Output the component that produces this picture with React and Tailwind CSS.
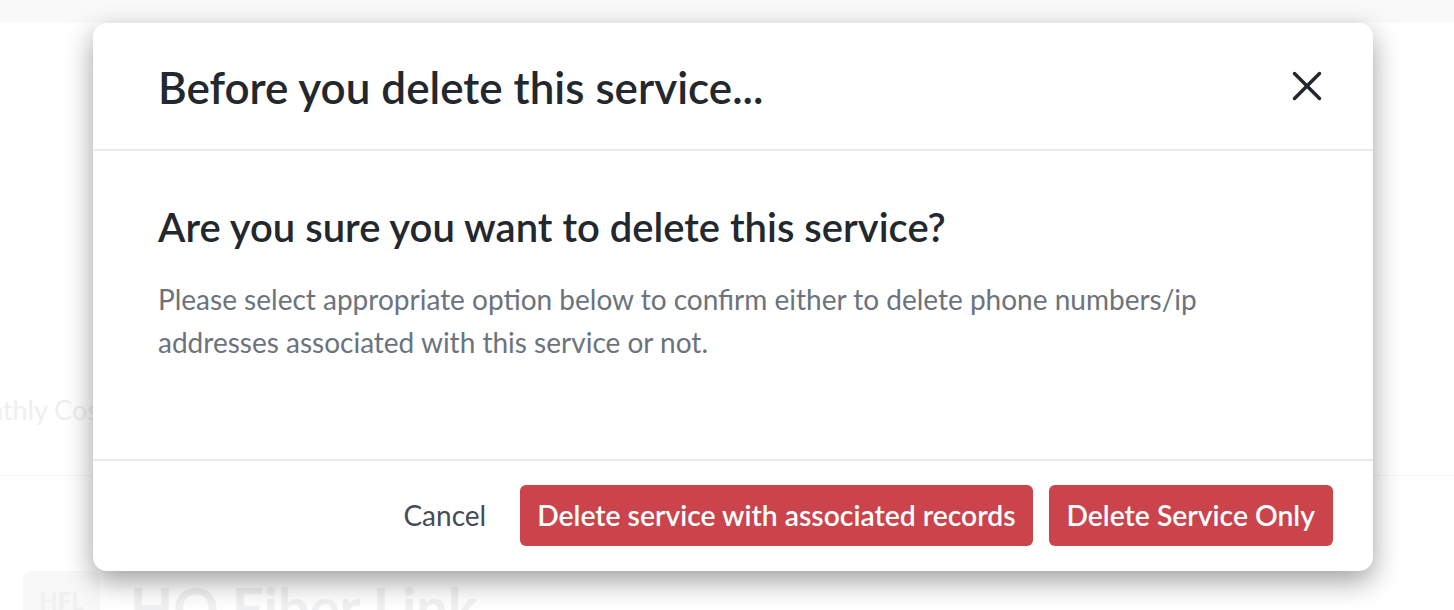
import React from 'react';

const font = { fontFamily: 'Lato, "Noto Sans", sans-serif' };

const CloseIcon = () => (
  <svg width="30" height="30" viewBox="0 0 30 30" fill="none" stroke="#23272e" strokeWidth="3.5" strokeLinecap="round">
    <line x1="2.5" y1="2.5" x2="27.5" y2="27.5" />
    <line x1="27.5" y1="2.5" x2="2.5" y2="27.5" />
  </svg>
);

const App = () => {
  return (
    <div className="relative w-[1454px] h-[610px] overflow-hidden bg-white" style={font}>
      {/* Page behind the modal */}
      <div className="h-[22px] bg-[#f6f6f6] border-b border-[#efefef]"></div>
      <div className="pt-[368px]">
        <div className="h-[86px] border-b border-[#eeeeee] flex items-start">
          <span className="-ml-[52px] text-[27px] text-[#e3e5e8]">Monthly Cost</span>
        </div>
        <div className="flex items-start gap-[30px] pl-[23px] pt-[95px]">
          <div className="w-[77px] h-[60px] rounded-[8px] bg-[#f3f4f5] flex items-center justify-center text-[24px] font-bold text-[#e4e6e9]">HFL</div>
          <span className="text-[56px] font-bold leading-none pt-[8px] text-[#e6e8eb]">HQ Fiber Link</span>
        </div>
      </div>

      {/* Overlay + modal */}
      <div className="absolute inset-0 bg-white/40">
        <div className="ml-[93px] mt-[23px] w-[1280px] h-[548px] bg-white rounded-[14px] shadow-[0_10px_28px_rgba(0,0,0,0.38)] flex flex-col">
          <div className="h-[128px] flex items-center justify-between pl-[65px] pr-[51px] border-b-2 border-[#e9e9e9]">
            <h2 className="text-[44px] font-semibold text-[#23272e] leading-none pt-[2px]">Before you delete this service...</h2>
            <CloseIcon />
          </div>
          <div className="flex-1 pl-[65px] pr-[115px] pt-[50px]">
            <h3 className="text-[40px] font-semibold text-[#23272e] leading-[52px]">Are you sure you want to delete this service?</h3>
            <p className="mt-[25px] text-[28px] leading-[43px] text-[#6c737c]">
              Please select appropriate option below to confirm either to delete phone numbers/ip addresses associated with this service or not.
            </p>
          </div>
          <div className="h-[112px] border-t-2 border-[#e9e9e9] flex items-center justify-end gap-[16px] pr-[40px] pb-[2px]">
            <button className="mr-[18px] text-[28px] text-[#454c54]">Cancel</button>
            <button className="h-[61px] px-[17px] rounded-[6px] bg-[#cb444b] text-white text-[28.3px] font-semibold">Delete service with associated records</button>
            <button className="h-[61px] px-[18px] rounded-[6px] bg-[#cb444b] text-white text-[28.3px] font-semibold">Delete Service Only</button>
          </div>
        </div>
      </div>
    </div>
  );
};

export default App;
